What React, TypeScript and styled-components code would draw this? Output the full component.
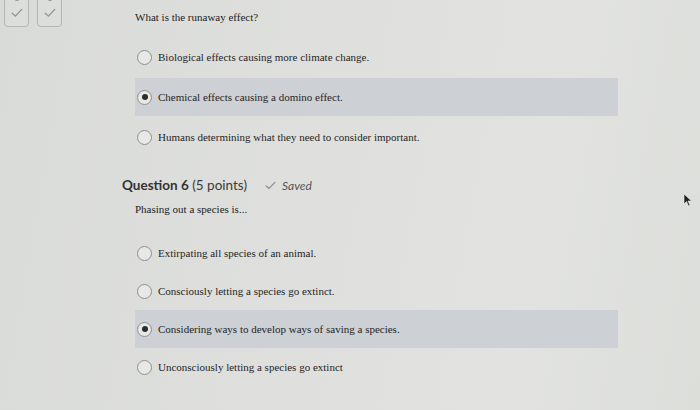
import React from 'react';
import styled, { createGlobalStyle } from 'styled-components';

// ===== GLOBAL =====
const GlobalStyle = createGlobalStyle`
  html, body {
    margin: 0;
    padding: 0;
    width: 700px;
    height: 410px;
    overflow: hidden;
    background: linear-gradient(100deg, #d9dbd8 0%, #dfe0dd 45%, #e2e3e0 75%, #dcdeda 100%);
  }
`;

// ===== LAYOUT =====
const Page = styled.div`
  position: relative;
  display: flex;
  width: 700px;
  height: 410px;
`;

const Sidebar = styled.div`
  width: 122px;
  flex-shrink: 0;
  display: flex;
  align-items: flex-start;
  gap: 8px;
  padding-left: 4px;
  box-sizing: border-box;
`;

const NavTab = styled.div`
  width: 25px;
  height: 31px;
  margin-top: -4px;
  border: 1px solid #b4b6b3;
  border-radius: 4px;
  background: #dcdedb;
  display: flex;
  flex-direction: column;
  align-items: center;
  justify-content: space-between;
  padding: 1px 0 8px;
  box-sizing: border-box;
`;

const TabDot = styled.span`
  width: 4px;
  height: 3px;
  border-radius: 2px;
  background: #9a9c9c;
`;

const Main = styled.div`
  flex: 1;
  display: flex;
  flex-direction: column;
  padding-top: 10px;
`;

const QuestionBlock = styled.div`
  display: flex;
  flex-direction: column;
  padding-left: 13px;
  width: 496px;
  box-sizing: border-box;
`;

const Prompt = styled.div`
  font-family: "Liberation Serif", "Times New Roman", serif;
  font-size: 11px;
  line-height: 14px;
  color: #222;
`;

const Options = styled.div<{ $top: number; $gap: number }>`
  display: flex;
  flex-direction: column;
  gap: ${p => p.$gap}px;
  margin-top: ${p => p.$top}px;
`;

const OptionRow = styled.div<{ $selected?: boolean }>`
  height: 38px;
  display: flex;
  align-items: center;
  gap: 6px;
  padding-left: 2px;
  background: ${p => (p.$selected ? '#cdd1d5' : 'transparent')};
  font-family: "Liberation Serif", "Times New Roman", serif;
  font-size: 11px;
  color: #1f1f1f;
`;

const Radio = styled.span<{ $checked?: boolean }>`
  width: 13px;
  height: 13px;
  border-radius: 50%;
  border: 1px solid #8d8f8f;
  background: #e8e9e7;
  display: flex;
  align-items: center;
  justify-content: center;
  flex-shrink: 0;

  &::after {
    content: '';
    display: ${p => (p.$checked ? 'block' : 'none')};
    width: 6px;
    height: 6px;
    border-radius: 50%;
    background: #2d2d2d;
  }
`;

const Heading = styled.div`
  display: flex;
  align-items: center;
  gap: 18px;
  margin-top: 21px;
  height: 16px;
`;

const HeadingTitle = styled.h3`
  margin: 0;
  font-family: Lato, "Open Sans", sans-serif;
  font-size: 13.5px;
  font-weight: 400;
  color: #3a3a3a;

  strong {
    font-weight: 700;
    color: #333;
  }
`;

const SavedTag = styled.span`
  display: flex;
  align-items: center;
  gap: 6px;
  font-family: Lato, "Open Sans", sans-serif;
  font-style: italic;
  font-size: 12px;
  color: #555;
`;

const SubPrompt = styled(Prompt)`
  margin-top: 9px;
  padding-left: 13px;
`;

const Cursor = styled.svg`
  position: absolute;
  left: 683px;
  top: 193px;
`;

const CheckIcon = ({ size = 12, color = '#8e9090' }: { size?: number; color?: string }) => (
  <svg width={size} height={size * 0.8} viewBox="0 0 12 10" fill="none">
    <path d="M1 5.5 L4.3 8.5 L11 1.5" stroke={color} strokeWidth="1.3" strokeLinecap="round" strokeLinejoin="round" />
  </svg>
);

// ===== DATA =====
const q5 = [
  'Biological effects causing more climate change.',
  'Chemical effects causing a domino effect.',
  'Humans determining what they need to consider important.',
];
const q6 = [
  'Extirpating all species of an animal.',
  'Consciously letting a species go extinct.',
  'Considering ways to develop ways of saving a species.',
  'Unconsciously letting a species go extinct',
];

export default function App() {
  return (
    <>
      <GlobalStyle />
      <Page>
        <Sidebar>
          <NavTab>
            <TabDot />
            <CheckIcon />
          </NavTab>
          <NavTab>
            <TabDot />
            <CheckIcon />
          </NavTab>
        </Sidebar>
        <Main>
          <QuestionBlock>
            <Prompt>What is the runaway effect?</Prompt>
            <Options $top={14} $gap={2}>
              {q5.map((t, i) => (
                <OptionRow key={t} $selected={i === 1}>
                  <Radio $checked={i === 1} />
                  {t}
                </OptionRow>
              ))}
            </Options>
          </QuestionBlock>
          <Heading>
            <HeadingTitle>
              <strong>Question 6</strong> (5 points)
            </HeadingTitle>
            <SavedTag>
              <CheckIcon size={11} color="#8a8c8c" />
              Saved
            </SavedTag>
          </Heading>
          <SubPrompt>Phasing out a species is...</SubPrompt>
          <QuestionBlock>
            <Options $top={18} $gap={0}>
              {q6.map((t, i) => (
                <OptionRow key={t} $selected={i === 2}>
                  <Radio $checked={i === 2} />
                  {t}
                </OptionRow>
              ))}
            </Options>
          </QuestionBlock>
        </Main>
        <Cursor width="10" height="14" viewBox="0 0 10 14">
          <path d="M1 1 L1 11 L3.5 8.5 L5.5 13 L7 12.3 L5 8 L8.5 8 Z" fill="#222" stroke="#eee" strokeWidth="0.6" />
        </Cursor>
      </Page>
    </>
  );
}
